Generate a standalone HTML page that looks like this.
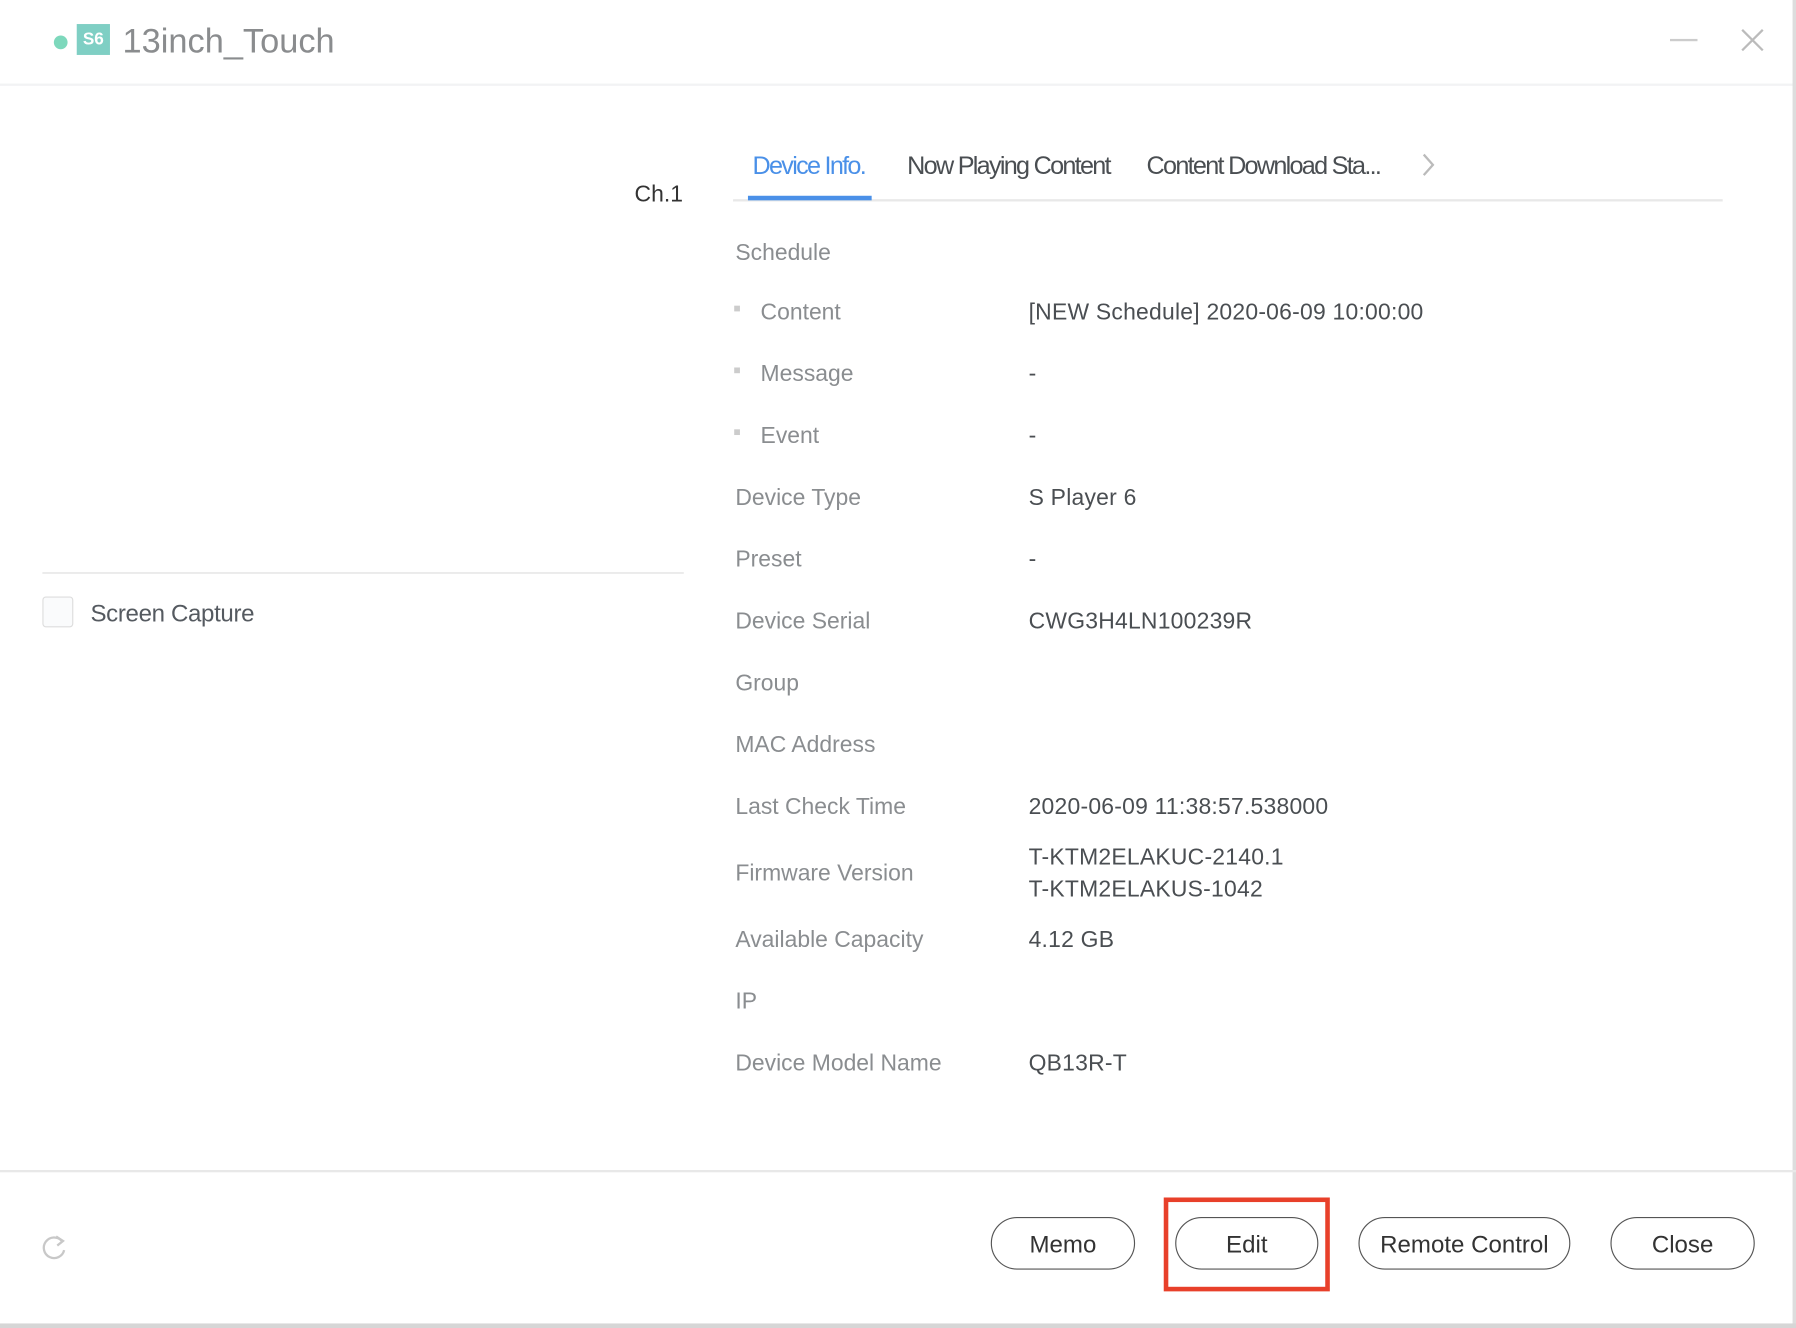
<!DOCTYPE html>
<html><head><meta charset="utf-8"><style>
html,body{margin:0;padding:0;background:#fff;overflow:hidden}
body{width:1796px;height:1328px;position:relative}
#w{position:absolute;left:0;top:0;width:1568px;height:1160px;transform:scale(1.14541,1.14483);transform-origin:0 0;font-family:"Liberation Sans","DejaVu Sans",sans-serif}
.a{position:absolute;white-space:nowrap}
.l{position:absolute;left:642px;font-size:20px;color:#8a8d90;margin-top:2px}
.v{position:absolute;left:898px;font-size:20px;color:#4a4e52;margin-top:2px;letter-spacing:0.2px}
.btn{position:absolute;top:1063px;height:46px;border:1.5px solid #555;border-radius:24px;box-sizing:border-box;font-size:21px;color:#333;text-align:center;line-height:47px}
.tab{position:absolute;top:132px;font-size:22px;letter-spacing:-1.5px;color:#4a4e52}
</style></head><body><div id="w">
<div class="a" style="left:0;top:73px;width:1568px;height:2px;background:#f2f3f4"></div>
<div class="a" style="left:1565px;top:0;width:3px;height:1160px;background:#ddd"></div>
<div class="a" style="left:0;top:1156px;width:1568px;height:4px;background:#d6d6d6"></div>
<div class="a" style="left:47px;top:31px;width:12px;height:12px;border-radius:50%;background:#7dd8bc"></div>
<div class="a" style="left:67px;top:21px;width:29px;height:27px;background:#7fcfc4;color:#fff;font-size:15px;font-weight:bold;text-align:center;line-height:27px">S6</div>
<div class="a" style="left:107px;top:20px;font-size:30px;color:#8a8c8e">13inch_Touch</div>
<div class="a" style="left:1458px;top:34px;width:24px;height:2px;background:#ccc"></div>
<svg class="a" style="left:1519px;top:24px" width="22" height="22"><path d="M2 2L20 20M20 2L2 20" stroke="#bbb" stroke-width="2"/></svg>
<div class="a" style="left:554px;top:159px;font-size:20px;color:#333">Ch.1</div>
<div class="a" style="left:37px;top:500px;width:560px;height:1px;background:#ddd"></div>
<div class="a" style="left:37px;top:521px;width:27px;height:27px;border:1px solid #ddd;border-radius:3px;box-sizing:border-box;background:#fafbfc"></div>
<div class="a" style="left:79px;top:525px;font-size:21px;color:#555a60;letter-spacing:-0.3px">Screen Capture</div>
<div class="tab" style="left:657px;color:#4a90e8">Device Info.</div>
<div class="tab" style="left:792px">Now Playing Content</div>
<div class="tab" style="left:1001px">Content Download Sta...</div>
<svg class="a" style="left:1240px;top:133px" width="14" height="22"><path d="M3 2L11 11L3 20" stroke="#bbb" stroke-width="2" fill="none"/></svg>
<div class="a" style="left:640px;top:174px;width:864px;height:2px;background:#e8e8e8"></div>
<div class="a" style="left:653px;top:171px;width:108px;height:4px;background:#4a90e8"></div>
<div class="l" style="top:208px">Schedule</div>
<div class="l" style="top:260px;left:664px">Content</div><div class="a" style="left:641px;top:267px;width:5px;height:5px;background:#ccc"></div>
<div class="v" style="top:260px">[NEW Schedule] 2020-06-09 10:00:00</div>
<div class="l" style="top:314px;left:664px">Message</div><div class="a" style="left:641px;top:321px;width:5px;height:5px;background:#ccc"></div>
<div class="v" style="top:314px">-</div>
<div class="l" style="top:368px;left:664px">Event</div><div class="a" style="left:641px;top:375px;width:5px;height:5px;background:#ccc"></div>
<div class="v" style="top:368px">-</div>
<div class="l" style="top:422px">Device Type</div><div class="v" style="top:422px">S Player 6</div>
<div class="l" style="top:476px">Preset</div><div class="v" style="top:476px">-</div>
<div class="l" style="top:530px">Device Serial</div><div class="v" style="top:530px">CWG3H4LN100239R</div>
<div class="l" style="top:584px">Group</div>
<div class="l" style="top:638px">MAC Address</div>
<div class="l" style="top:692px">Last Check Time</div><div class="v" style="top:692px">2020-06-09 11:38:57.538000</div>
<div class="l" style="top:750px">Firmware Version</div><div class="v" style="top:736px">T-KTM2ELAKUC-2140.1</div><div class="v" style="top:764px">T-KTM2ELAKUS-1042</div>
<div class="l" style="top:808px">Available Capacity</div><div class="v" style="top:808px">4.12 GB</div>
<div class="l" style="top:862px">IP</div>
<div class="l" style="top:916px">Device Model Name</div><div class="v" style="top:916px">QB13R-T</div>
<div class="a" style="left:0;top:1022px;width:1568px;height:2px;background:#e8e8e8"></div>
<svg class="a" style="left:36px;top:1077px" width="24" height="26"><path d="M18 7A9 9 0 1 0 20 15" stroke="#c8c8c8" stroke-width="2" fill="none"/><path d="M13 3L19 7L14 11" stroke="#c8c8c8" stroke-width="2" fill="none"/></svg>
<div class="btn" style="left:865px;width:126px">Memo</div>
<div class="btn" style="left:1026px;width:125px">Edit</div>
<div class="a" style="left:1016px;top:1046px;width:145px;height:82px;border:4px solid #e8402a;box-sizing:border-box"></div>
<div class="btn" style="left:1186px;width:185px">Remote Control</div>
<div class="btn" style="left:1406px;width:126px">Close</div>
</div></body></html>
